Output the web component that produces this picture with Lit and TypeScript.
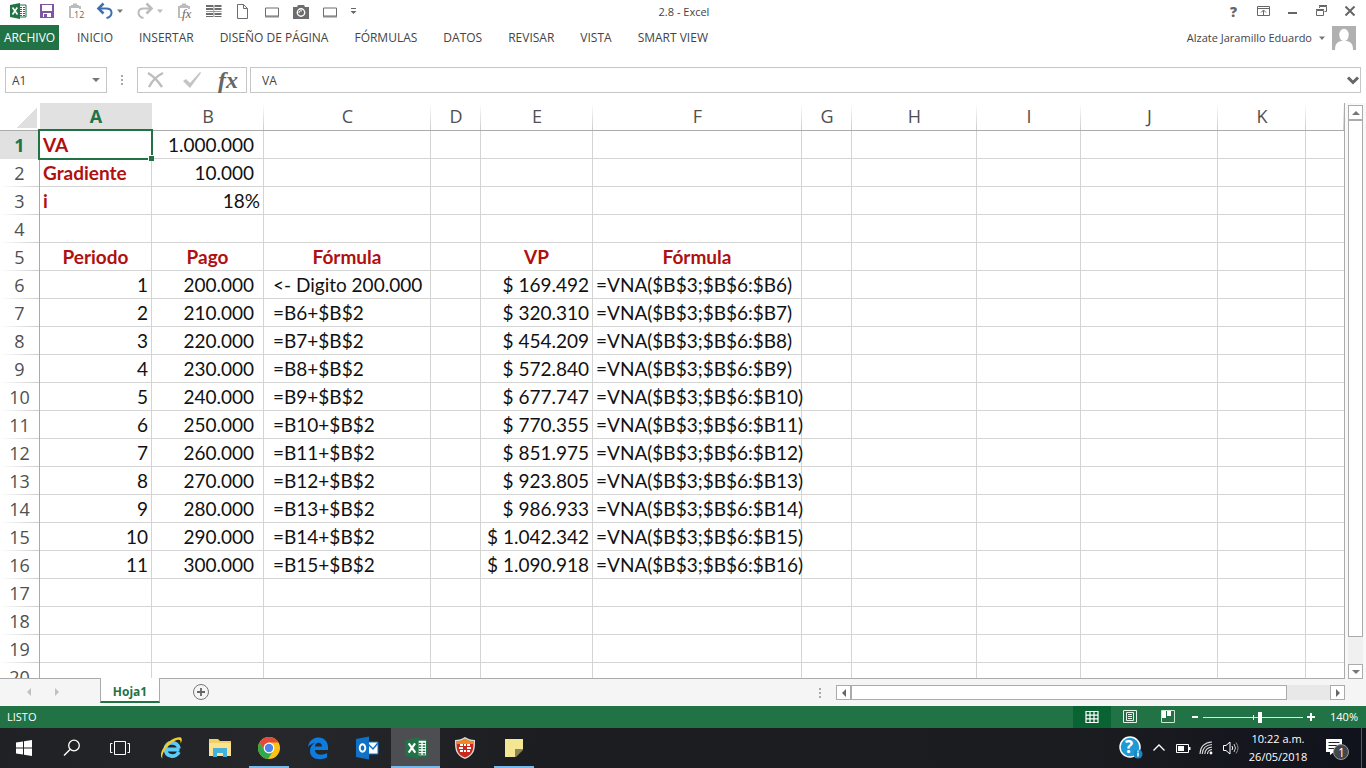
import { LitElement, html, svg, css, nothing } from "lit";
import { customElement } from "lit/decorators.js";
import { classMap } from "lit/directives/class-map.js";

type Cell = { text: string; kind: string };

const COLUMNS = ["A", "B", "C", "D", "E", "F", "G", "H", "I", "J", "K", ""];
const MENU = ["INICIO", "INSERTAR", "DISEÑO DE PÁGINA", "FÓRMULAS", "DATOS", "REVISAR", "VISTA", "SMART VIEW"];
const PRESENT_VALUES = ["169.492", "320.310", "454.209", "572.840", "677.747", "770.355", "851.975", "923.805", "986.933", "1.042.342", "1.090.918"];

const CELLS: Record<string, Cell> = {
  A1: { text: "VA", kind: "label" },
  A2: { text: "Gradiente", kind: "label" },
  A3: { text: "i", kind: "label" },
  B1: { text: "1.000.000", kind: "amount" },
  B2: { text: "10.000", kind: "amount" },
  B3: { text: "18%", kind: "number" },
  A5: { text: "Periodo", kind: "heading" },
  B5: { text: "Pago", kind: "heading" },
  C5: { text: "Fórmula", kind: "heading" },
  E5: { text: "VP", kind: "heading" },
  F5: { text: "Fórmula", kind: "heading" },
};
PRESENT_VALUES.forEach((value, i) => {
  const row = i + 6;
  CELLS[`A${row}`] = { text: `${i + 1}`, kind: "number" };
  CELLS[`B${row}`] = { text: `${200 + i * 10}.000`, kind: "amount" };
  CELLS[`C${row}`] = { text: i === 0 ? "<- Digito 200.000" : `=B${row - 1}+$B$2`, kind: "indent" };
  CELLS[`E${row}`] = { text: `$ ${value}`, kind: "number" };
  CELLS[`F${row}`] = { text: `=VNA($B$3;$B$6:$B${row})`, kind: "plain" };
});

const icon = (size: number, body: unknown) =>
  html`<svg width=${size} height=${size} viewBox="0 0 ${size} ${size}" aria-hidden="true">${body}</svg>`;

const excelBody = svg`
  <path d="M10 3h7v12h-7z" fill="#fff" stroke="#217346"/>
  <path d="M11 5.5h2M14 5.5h2M11 7.5h2M14 7.5h2M11 9.5h2M14 9.5h2M11 11.5h2M14 11.5h2M11 13.5h2M14 13.5h2" stroke="#217346"/>
  <path d="M1 3l10-2v16L1 15z" fill="#217346"/>
  <path d="M3.5 5.5l5 7M8.3 5.5l-4.8 7" stroke="#fff" stroke-width="1.6"/>`;

const I = {
  excel: icon(18, excelBody),
  save: icon(18, svg`<path d="M2 2h14v14H2z" fill="#8056a0"/><path d="M4 3h10v6H4z" fill="#fff"/><path d="M5 11h8v4H5z" fill="#fff"/><path d="M6 12h3v3H6z" fill="#8056a0"/>`),
  paste12: icon(18, svg`<path d="M2 4h2v11h3v1H2zM12 4h2v3h-2z" fill="#bcbcbc"/><path d="M4 3h2V1.500h4V3h2v3H4z" fill="#bcbcbc"/><text x="7" y="16" font-family="Open Sans, sans-serif" font-size="9" fill="#666">12</text>`),
  undo: icon(18, svg`<path d="M2.500 6.500H10c7.500 0 7 8 .500 9.500" fill="none" stroke="#3e6fb0" stroke-width="2"/><path d="M7.500 1.500l-5 5 5 5" fill="none" stroke="#3e6fb0" stroke-width="2.600"/>`),
  redo: icon(18, svg`<path d="M15.500 6.500H8C.500 6.500 1 14.500 7.500 16" fill="none" stroke="#bcbcbc" stroke-width="2"/><path d="M10.500 1.500l5 5-5 5" fill="none" stroke="#bcbcbc" stroke-width="2.600"/>`),
  pasteFx: icon(18, svg`<path d="M2 4h2v11h3v1H2zM12 4h2v3h-2z" fill="#bcbcbc"/><path d="M4 3h2V1.500h4V3h2v3H4z" fill="#bcbcbc"/><text x="6" y="16" font-family="Liberation Serif, serif" font-style="italic" font-size="13" fill="#666">fx</text>`),
  panes: icon(18, svg`<path d="M1 3h7v2H1zM1 6h7v2H1zM1 11h7v2H1zM1 14h7v1H1zM9.500 3h7v2h-7zM9.500 6h7v2h-7zM9.500 11h7v2h-7zM9.500 14h7v1h-7z" fill="#6d6d6d"/><path d="M1 9.500h15.500M8.800 3v12" stroke="#999"/>`),
  page: icon(18, svg`<path d="M3.500 2.500h6l4 4v10h-10zM9.500 2.500v4h4" fill="none" stroke="#6d6d6d"/>`),
  frame: icon(18, svg`<path d="M2.500 6h13v8h-13z" fill="none" stroke="#6d6d6d"/><path d="M2 14h14v1.500H2z" fill="#8a8a8a"/>`),
  camera: icon(18, svg`<path d="M1 5h4l1-2h6l1 2h4v12H1z" fill="#6d6d6d"/><circle cx="9" cy="10.500" r="3.700" fill="#6d6d6d" stroke="#fff" stroke-width="1.400"/><path d="M7 11a2 2 0 0 1 3-2" fill="none" stroke="#fff"/>`),
  more: icon(8, svg`<path d="M1 1.500h5" stroke="#666"/><path d="M.500 4h6L3.500 7z" fill="#666"/>`),
  caret: icon(8, svg`<path d="M1 2.500h6L4 6z" fill="#777"/>`),
  caretPale: icon(8, svg`<path d="M1 2.500h6L4 6z" fill="#bbb"/>`),
  caretWide: icon(8, svg`<path d="M0 2h8L4 6z" fill="#777"/>`),
  help: icon(18, svg`<text x="5" y="15" font-family="Open Sans, sans-serif" font-weight="800" font-size="14" fill="#666">?</text>`),
  ribbon: icon(18, svg`<path d="M3.500 4.500h12v9h-12zM3.500 6.500h12" fill="none" stroke="#666"/><path d="M9.500 13V8.500M7 10.500l2.500-2.500 2.500 2.500" fill="none" stroke="#666"/>`),
  minimize: icon(18, svg`<path d="M5 10h9v2H5z" fill="#666"/>`),
  restore: icon(18, svg`<path d="M4.500 8.500h7v5h-7zM4 7.500h8M7.500 6V4.500h7v5h-2M7 3.500h8" fill="none" stroke="#666"/>`),
  close: icon(18, svg`<path d="M4.500 4.500l9 9M13.500 4.500l-9 9" stroke="#666" stroke-width="2"/>`),
  avatar: icon(24, svg`<path d="M0 0h24v24H0z" fill="#b0b0b0"/><ellipse cx="12" cy="9" rx="4.700" ry="6.200" fill="#fff"/><path d="M3 24c0-6 2-8 6-9h6c4 1 6 3 6 9z" fill="#fff"/>`),
  cancel: icon(20, svg`<path d="M2 3c5 3 10 8 14 14M17 3C11 6 6 11 3 17" fill="none" stroke="#bdbdbd" stroke-width="2.400"/>`),
  accept: icon(20, svg`<path d="M1 11l3-2 4 4L18 2l1 1L8 18z" fill="#c4c4c4"/>`),
  chevronDown: icon(14, svg`<path d="M2 4.500l5 5 5-5" fill="none" stroke="#666" stroke-width="3"/>`),
  up: icon(8, svg`<path d="M0 6h8L4 2z" fill="#777"/>`),
  down: icon(8, svg`<path d="M0 2h8L4 6z" fill="#777"/>`),
  left: icon(8, svg`<path d="M6 0v8L2 4z" fill="#666"/>`),
  right: icon(8, svg`<path d="M2 0v8l4-4z" fill="#666"/>`),
  leftPale: icon(8, svg`<path d="M6 0v8L2 4z" fill="#c0c0c0"/>`),
  rightPale: icon(8, svg`<path d="M2 0v8l4-4z" fill="#c0c0c0"/>`),
  add: icon(18, svg`<circle cx="9" cy="9" r="7.500" fill="none" stroke="#777"/><path d="M9 5v8M5 9h8" stroke="#666" stroke-width="1.800"/>`),
  viewNormal: icon(16, svg`<path d="M2 2.500h12v11H2zM2 6.200h12M2 9.800h12M6 2.500v11M10 2.500v11" fill="none" stroke="#fff" stroke-width="1.200"/>`),
  viewPage: icon(16, svg`<path d="M1.500 1.500h13v12h-13zM4.500 3.500h7v8h-7zM6 5.500h4M6 7.500h4M6 9.500h4" fill="none" stroke="#e4f2e9"/>`),
  viewBreak: icon(16, svg`<path d="M1.500 1.500h13v12h-13z" fill="none" stroke="#cfe5d7"/><path d="M2 2h4v7H2zM7 2h4v5H7z" fill="#fff"/>`),
  minus: icon(8, svg`<path d="M1 4h6" stroke="#fff" stroke-width="2"/>`),
  plus: icon(8, svg`<path d="M0 4h8M4 0v8" stroke="#fff" stroke-width="2"/>`),
  start: icon(24, svg`<path d="M4 6.500l7-1v6H4zM12 5.300l8-1.300v7.500h-8zM4 12.500h7v6l-7-1zM12 12.500h8V20l-8-1.300z" fill="#fff"/>`),
  search: icon(24, svg`<circle cx="14" cy="9.500" r="5.300" fill="none" stroke="#fff" stroke-width="1.300"/><path d="M10 13.500L4 19.500" stroke="#fff" stroke-width="1.500"/>`),
  tasks: icon(24, svg`<path d="M6.500 5.500h11v13h-11zM4.500 7.500h-2v9h2M19.500 7.500h2v9h-2" fill="none" stroke="#fff"/>`),
  ie: icon(24, svg`<path d="M20.500 13.500H7.500M19.800 16C17 22.500 6.500 21 6.500 13S18.500 4.500 20 12.500" fill="none" stroke="#5ccbf5" stroke-width="3.800"/><path d="M3.500 22.500C-2.500 17 11 0 21.500 1.200c2.500 1.500 1 4.800 0 6.300.500-3-.500-4.500-3.500-3.500C10.500 6.500 2 16.500 3.500 22.500z" fill="#f5cd2b"/>`),
  folder: icon(24, svg`<path d="M1 3h9l2 2h11v15H1z" fill="#f2cf68"/><path d="M1 7h22v13H1z" fill="#fce28f"/><path d="M5 21v-9h14v9h-4v-4H9v4z" fill="#42b1dc"/>`),
  chrome: icon(24, svg`<circle cx="12" cy="12" r="11" fill="#fbc116"/><path d="M2.500 6.500A11 11 0 0 1 21.500 6.500H12L7.200 14.800z" fill="#e24a3b"/><path d="M2.500 6.500A11 11 0 0 0 11 23l5.500-8.500H7.200z" fill="#2da94f"/><circle cx="12" cy="12" r="5.400" fill="#fff"/><circle cx="12" cy="12" r="4.200" fill="#4b86ee"/>`),
  edge: icon(24, svg`<path d="M2 11C3 4 8 1.500 12.500 1.500c6 0 9.500 4.500 9.500 9.500v3H9c0 5 7 6 12 3v4.500c-6 3-17 2.500-17-6.500 0-4 2-6.500 5-8-3 .500-5.500 2-7 4zM9 10.500h7c0-5-7-5-7 0z" fill="#0f7bdc"/>`),
  outlook: icon(24, svg`<path d="M12 6h11v12H12z" fill="#fff" stroke="#0f72c6"/><path d="M12 7l6 6 5-6" fill="none" stroke="#0f72c6" stroke-width="1.500"/><path d="M1 3l13-2.500v23L1 21z" fill="#0f72c6"/><ellipse cx="7.500" cy="12" rx="2.800" ry="3.700" fill="none" stroke="#fff" stroke-width="1.900"/>`),
  excelLarge: html`<svg width="24" height="24" viewBox="0 0 18 18" aria-hidden="true">${excelBody}</svg>`,
  shield: icon(24, svg`<path d="M2 4c4 0 7-1 10-3 3 2 6 3 10 3 0 9 0 15-10 19C2 19 2 13 2 4z" fill="#ddd"/><path d="M3.500 5.200c3.500 0 6-.800 8.500-2.500 2.500 1.700 5 2.500 8.500 2.500 0 8 0 12.800-8.500 16.300C3.500 18 3.500 13.200 3.500 5.200z" fill="#c9281c"/><path d="M3.500 5.200c3.500 0 6-.800 8.500-2.500 2.500 1.700 5 2.500 8.500 2.500V8h-17z" fill="#ee8b20"/><path d="M7 8h3v2H7zM11 8h2v2h-2zM14 8h3v2h-3zM6 11h4v2H6zM14 11h4v2h-4zM7 14h3v2H7zM11 14h2v2h-2zM14 14h3v2h-3z" fill="#fff"/>`),
  note: icon(24, svg`<path d="M3 3h18v10l-8 8H3z" fill="#f3e793"/><path d="M13 13h8v1l-7 7h-1z" fill="#8d8453"/>`),
  support: icon(24, svg`<circle cx="11" cy="11" r="10" fill="#1c9bd7" stroke="#fff" stroke-width="1.500"/><text x="6" y="17" font-family="Open Sans, sans-serif" font-weight="700" font-size="17" fill="#fff">?</text><circle cx="19" cy="18" r="4.500" fill="#168ac9"/><path d="M19 16.500v4M19 14.500v1.200" stroke="#fff" stroke-width="1.500"/>`),
  chevronUp: icon(16, svg`<path d="M2.500 10.500L8 5l5.500 5.500" fill="none" stroke="#fff" stroke-width="1.300"/>`),
  battery: icon(16, svg`<path d="M1.500 4.500h12v8h-12z" fill="none" stroke="#fff"/><path d="M3 6h6v5H3zM14 7h1.500v3H14z" fill="#fff"/>`),
  wifi: icon(16, svg`<circle cx="12" cy="13" r="1.400" fill="#fff"/><path d="M8.500 14c0-2.500 1.500-4 4.500-4.500M5.800 14C6 10 8.500 7.500 13 7M3.200 14C3.500 8.500 7 5 13 4.500M1 14C1.300 7 5.500 2.500 13 2" fill="none" stroke="#ddd" stroke-width="1.100"/>`),
  volume: icon(16, svg`<path d="M.500 5.500H3l4-3.500v12L3 10.500H.500z" fill="none" stroke="#fff"/><path d="M9 6q1.500 2 0 4" fill="none" stroke="#fff"/><path d="M11 4q3 4 0 8" fill="none" stroke="#ccc"/><path d="M13 2.500q4 5.500 0 11" fill="none" stroke="#888"/>`),
  notices: icon(24, svg`<path d="M1 3h16v13H9l-4 3v-3H1z" fill="#fff"/><path d="M3.500 6.500h11M3.500 9.500h11M3.500 12.500h6" stroke="#22242b"/><circle cx="16" cy="16" r="7.500" fill="#44464b" stroke="#999"/><text x="13" y="21" font-family="Open Sans, sans-serif" font-size="12" fill="#fff">1</text>`),
};

@customElement("app-root")
export class AppRoot extends LitElement {
  static styles = css`
    :host {
      display: flex;
      flex-direction: column;
      height: 100vh;
      overflow: hidden;
      background: #fff;
      color: #444;
      font-family: "Open Sans", "Noto Sans", sans-serif;
      font-size: 12px;
    }
    * { box-sizing: border-box; }
    svg { display: block; flex: none; overflow: visible; }
    button {
      display: flex;
      align-items: center;
      justify-content: center;
      margin: 0;
      padding: 0;
      border: 0;
      background: none;
      color: inherit;
      font: inherit;
    }
    input { min-width: 0; font: inherit; color: inherit; border: 0; background: none; outline: 0; }

    .titlebar { display: grid; grid-template-columns: 1fr auto 1fr; align-items: start; height: 25px; padding: 0 7px 0 9px; }
    .quick { display: flex; align-items: center; gap: 11px; height: 22px; }
    .split { display: flex; }
    .split-arrow { width: 11px; }
    .title { font-size: 11px; line-height: 24px; }
    .window { display: flex; justify-content: flex-end; gap: 11px; height: 22px; }

    .ribbon { display: flex; align-items: center; height: 25px; font-size: 12px; }
    .file { width: 59px; height: 25px; background: #217346; color: #fff; }
    .menu { display: flex; gap: 26px; padding-left: 18px; white-space: nowrap; }
    .account { display: flex; align-items: center; margin-left: auto; padding-right: 10px; gap: 6px; font-size: 11px; }

    .formula { display: flex; align-items: center; height: 26px; margin: 17px 5px 10px; }
    .namebox { display: flex; align-items: center; width: 102px; height: 26px; border: 1px solid #c6c6c6; padding: 0 6px; }
    .namebox input { flex: 1; padding: 0; }
    .dots { width: 30px; display: flex; justify-content: center; }
    .fx { display: flex; align-items: center; justify-content: space-between; width: 110px; height: 26px; padding: 0 8px; border: 1px solid #c6c6c6; }
    .fx-letter { font: italic bold 24px/22px "Liberation Serif", serif; color: #666; }
    .entry { display: flex; flex: 1; align-items: center; height: 26px; margin-left: 3px; border: 1px solid #c6c6c6; padding-left: 11px; }
    .entry input { flex: 1; padding: 0; }

    .workspace { display: flex; flex: 1; min-height: 0; gap: 3px; background: linear-gradient(to right, #fff calc(100% - 21px), #f8f8f8 0); }
    .grid { flex: 1; min-width: 0; overflow: hidden; border-right: 1px solid #ababab; border-bottom: 1px solid #ababab; background: #fff; }
    table { width: 100%; table-layout: fixed; border-collapse: separate; border-spacing: 0; }
    th, td { height: 28px; padding: 0 3px; overflow: visible; white-space: nowrap; line-height: 27px; }
    th { font-weight: 400; font-size: 18px; text-align: center; padding: 0; color: #505050; }
    td { border-right: 1px solid #d4d4d4; border-bottom: 1px solid #d4d4d4; font-family: Lato, sans-serif; font-size: 19px; color: #111; }
    td:last-child { border-right: 0; }
    thead th { border-bottom: 1px solid #ababab; background: linear-gradient(#fff, #ccc) right / 1px 100% no-repeat; }
    tbody th { border-right: 1px solid #ababab; background: linear-gradient(to right, #fff, #ccc) bottom / 100% 1px no-repeat; }
    thead th.active, tbody th.active { background: #e1e1e1; color: #217346; font-weight: 700; }
    thead th.corner { background: linear-gradient(to bottom right, transparent 50%, #dfdfdf 50%) 17px 5px / 20px 20px no-repeat; }
    .c-rows { width: 40px; } .c-A, .c-B, .c-E { width: 112px; } .c-C { width: 167px; } .c-D, .c-G { width: 50px; }
    .c-F { width: 209px; } .c-H { width: 125px; } .c-I { width: 104px; } .c-J { width: 137px; } .c-K { width: 88px; }
    .label, .heading { color: #b01010; font-weight: 700; }
    .heading { text-align: center; }
    .number, .amount { text-align: right; }
    .amount { padding-right: 9px; }
    .indent { padding-left: 9px; }
    .selected { position: relative; }
    .cursor { position: absolute; inset: -2px; border: 2px solid #217346; }
    .handle { position: absolute; right: -3px; bottom: -3px; width: 6px; height: 6px; background: #217346; border: solid #fff; border-width: 1px 0 0 1px; }

    .vscroll { display: flex; flex-direction: column; width: 15px; margin: 2px 3px 0 0; }
    .arrow { flex: none; width: 15px; height: 15px; border: 1px solid #ababab; background: #fff; }
    .track { flex: 1; display: flex; background: #f0f0f0; }
    .vthumb { width: 15px; height: 95%; border: 1px solid #ababab; background: #fff; }

    .sheets { display: flex; align-items: flex-start; height: 27px; background: #f5f5f5; }
    .nav { display: flex; width: 100px; height: 26px; padding-left: 20px; gap: 10px; }
    .nav button { width: 18px; }
    .tab { width: 60px; height: 25px; margin-top: -1px; padding-top: 3px; background: #fff; border: 1px solid #ababab; border-top: 0; border-bottom: 2px solid #217346; color: #217346; font-weight: 700; }
    .new { height: 26px; margin-left: 32px; }
    .hscroll { display: flex; align-items: center; width: 550px; height: 27px; margin-left: auto; padding-right: 21px; }
    .hscroll .dots { width: 8px; margin-right: 12px; }
    .hscroll .track { height: 15px; background: #e8e8e8; }
    .hthumb { width: 91%; border: 1px solid #ababab; background: #fff; }

    .status { display: flex; align-items: center; height: 22px; padding: 0 8px 0 7px; background: #217346; color: #fff; font-size: 11px; line-height: 20px; }
    .views { display: flex; margin-left: auto; }
    .views button { width: 38px; height: 22px; }
    .views .on { background: #0a6332; }
    .zoom { display: flex; align-items: center; gap: 4px; padding-left: 4px; }
    .zoom input { appearance: none; width: 100px; height: 22px; margin: 0; background: linear-gradient(#d7e8dd, #d7e8dd) center / 100% 1px no-repeat, linear-gradient(#fff, #fff) center / 1px 5px no-repeat; }
    .zoom input::-webkit-slider-thumb { appearance: none; width: 4px; height: 11px; background: #fff; }
    .percent { width: 43px; text-align: right; }

    .taskbar { display: flex; height: 40px; background: linear-gradient(100deg, #202124, #25272b 22%, #1c1d20 40%, #1b1c20 80%, #10121c); color: #fff; }
    .system { display: flex; padding-right: 2px; }
    .app { width: 49px; height: 40px; border-bottom: 2px solid transparent; padding-top: 1px; }
    .system .app { width: 48px; }
    .app.open { background: linear-gradient(#76b9ed, #76b9ed) bottom / 40px 2px no-repeat border-box; }
    .app.current { background: #4c4e52; border-color: #76b9ed; }
    .tray { display: flex; align-items: center; gap: 8px; margin-left: auto; padding-right: 12px; }
    .tray-icon { width: 16px; height: 40px; }
    .clock { width: 62px; text-align: center; line-height: 18px; font-size: 11px; }
    .peek { width: 5px; height: 40px; border-left: 1px solid #55585f; }
    .support { width: 24px; height: 40px; }
    .notices { width: 24px; height: 40px; margin-left: 8px; }
  `;

  private tool(glyph: unknown, label: string, cls = "") {
    return html`<button class=${cls} aria-label=${label} title=${label}>${glyph}</button>`;
  }

  private cell(column: string, row: number) {
    const cell = CELLS[`${column}${row}`];
    const selected = column === "A" && row === 1;
    return html`<td class=${classMap({ [cell?.kind ?? "empty"]: true, selected })}>${cell?.text ?? nothing}${selected ? html`<span class="cursor"></span><span class="handle"></span>` : nothing}</td>`;
  }

  render() {
    const rows = Array.from({ length: 20 }, (_, i) => i + 1);
    const dots = html`<svg width="4" height="12" viewBox="0 0 4 12" aria-hidden="true"><path d="M1 1h2v2H1zM1 5h2v2H1zM1 9h2v2H1z" fill="#aaa"/></svg>`;
    return html`
      <header class="titlebar">
        <div class="quick">
          ${I.excel}${this.tool(I.save, "Guardar")}${this.tool(I.paste12, "Pegar valores")}
          <div class="split">${this.tool(I.undo, "Deshacer")}${this.tool(I.caret, "Lista deshacer", "split-arrow")}</div>
          <div class="split">${this.tool(I.redo, "Rehacer")}${this.tool(I.caretPale, "Lista rehacer", "split-arrow")}</div>
          ${this.tool(I.pasteFx, "Pegar fórmulas")}${this.tool(I.panes, "Inmovilizar")}${this.tool(I.page, "Nuevo")}
          ${this.tool(I.frame, "Botón")}${this.tool(I.camera, "Cámara")}${this.tool(I.frame, "Marco")}${this.tool(I.more, "Personalizar")}
        </div>
        <span class="title">2.8 - Excel</span>
        <div class="window">
          ${this.tool(I.help, "Ayuda")}${this.tool(I.ribbon, "Cinta")}${this.tool(I.minimize, "Minimizar")}${this.tool(I.restore, "Restaurar")}${this.tool(I.close, "Cerrar")}
        </div>
      </header>
      <nav class="ribbon">
        <button class="file">ARCHIVO</button>
        <div class="menu">${MENU.map((name) => html`<button>${name}</button>`)}</div>
        <button class="account">Alzate Jaramillo Eduardo ${I.caret}${I.avatar}</button>
      </nav>
      <div class="formula">
        <div class="namebox"><input aria-label="Cuadro de nombres" value="A1" />${this.tool(I.caretWide, "Nombres")}</div>
        <span class="dots">${dots}</span>
        <div class="fx">${this.tool(I.cancel, "Cancelar")}${this.tool(I.accept, "Introducir")}<button class="fx-letter" aria-label="Insertar función">fx</button></div>
        <div class="entry"><input aria-label="Barra de fórmulas" value="VA" />${this.tool(I.chevronDown, "Expandir")}</div>
      </div>
      <main class="workspace">
        <div class="grid">
          <table>
            <colgroup><col class="c-rows" />${COLUMNS.map((c) => html`<col class=${`c-${c}`} />`)}</colgroup>
            <thead><tr><th class="corner"></th>${COLUMNS.map((c) => html`<th scope="col" class=${classMap({ active: c === "A" })}>${c}</th>`)}</tr></thead>
            <tbody>${rows.map((r) => html`<tr><th scope="row" class=${classMap({ active: r === 1 })}>${r}</th>${COLUMNS.map((c) => this.cell(c, r))}</tr>`)}</tbody>
          </table>
        </div>
        <div class="vscroll">
          ${this.tool(I.up, "Subir", "arrow")}
          <div class="track"><div class="vthumb"></div></div>
          ${this.tool(I.down, "Bajar", "arrow")}
        </div>
      </main>
      <div class="sheets">
        <div class="nav">${this.tool(I.leftPale, "Hoja anterior")}${this.tool(I.rightPale, "Hoja siguiente")}</div>
        <button class="tab">Hoja1</button>
        ${this.tool(I.add, "Hoja nueva", "new")}
        <div class="hscroll">
          <span class="dots">${dots}</span>
          ${this.tool(I.left, "Izquierda", "arrow")}
          <div class="track"><div class="hthumb"></div></div>
          ${this.tool(I.right, "Derecha", "arrow")}
        </div>
      </div>
      <div class="status">
        <span>LISTO</span>
        <div class="views">${this.tool(I.viewNormal, "Normal", "on")}${this.tool(I.viewPage, "Diseño de página")}${this.tool(I.viewBreak, "Saltos de página")}</div>
        <div class="zoom">${this.tool(I.minus, "Alejar")}<input type="range" min="0" max="100" value="57" aria-label="Zoom" />${this.tool(I.plus, "Acercar")}</div>
        <span class="percent">140%</span>
      </div>
      <footer class="taskbar">
        <div class="system">${this.tool(I.start, "Inicio", "app")}${this.tool(I.search, "Buscar", "app")}${this.tool(I.tasks, "Vista de tareas", "app")}</div>
        ${this.tool(I.ie, "Internet Explorer", "app")}${this.tool(I.folder, "Explorador", "app")}${this.tool(I.chrome, "Chrome", "app open")}
        ${this.tool(I.edge, "Edge", "app")}${this.tool(I.outlook, "Outlook", "app")}${this.tool(I.excelLarge, "Excel", "app current")}
        ${this.tool(I.shield, "FortiClient", "app")}${this.tool(I.note, "Notas", "app open")}
        <div class="tray">
          ${this.tool(I.support, "Soporte", "support")}${this.tool(I.chevronUp, "Iconos ocultos", "tray-icon")}${this.tool(I.battery, "Batería", "tray-icon")}
          ${this.tool(I.wifi, "Red", "tray-icon")}${this.tool(I.volume, "Volumen", "tray-icon")}
          <div class="clock">10:22 a.m.<br />26/05/2018</div>
          ${this.tool(I.notices, "Notificaciones", "notices")}
        </div>
        <div class="peek"></div>
      </footer>`;
  }
}
